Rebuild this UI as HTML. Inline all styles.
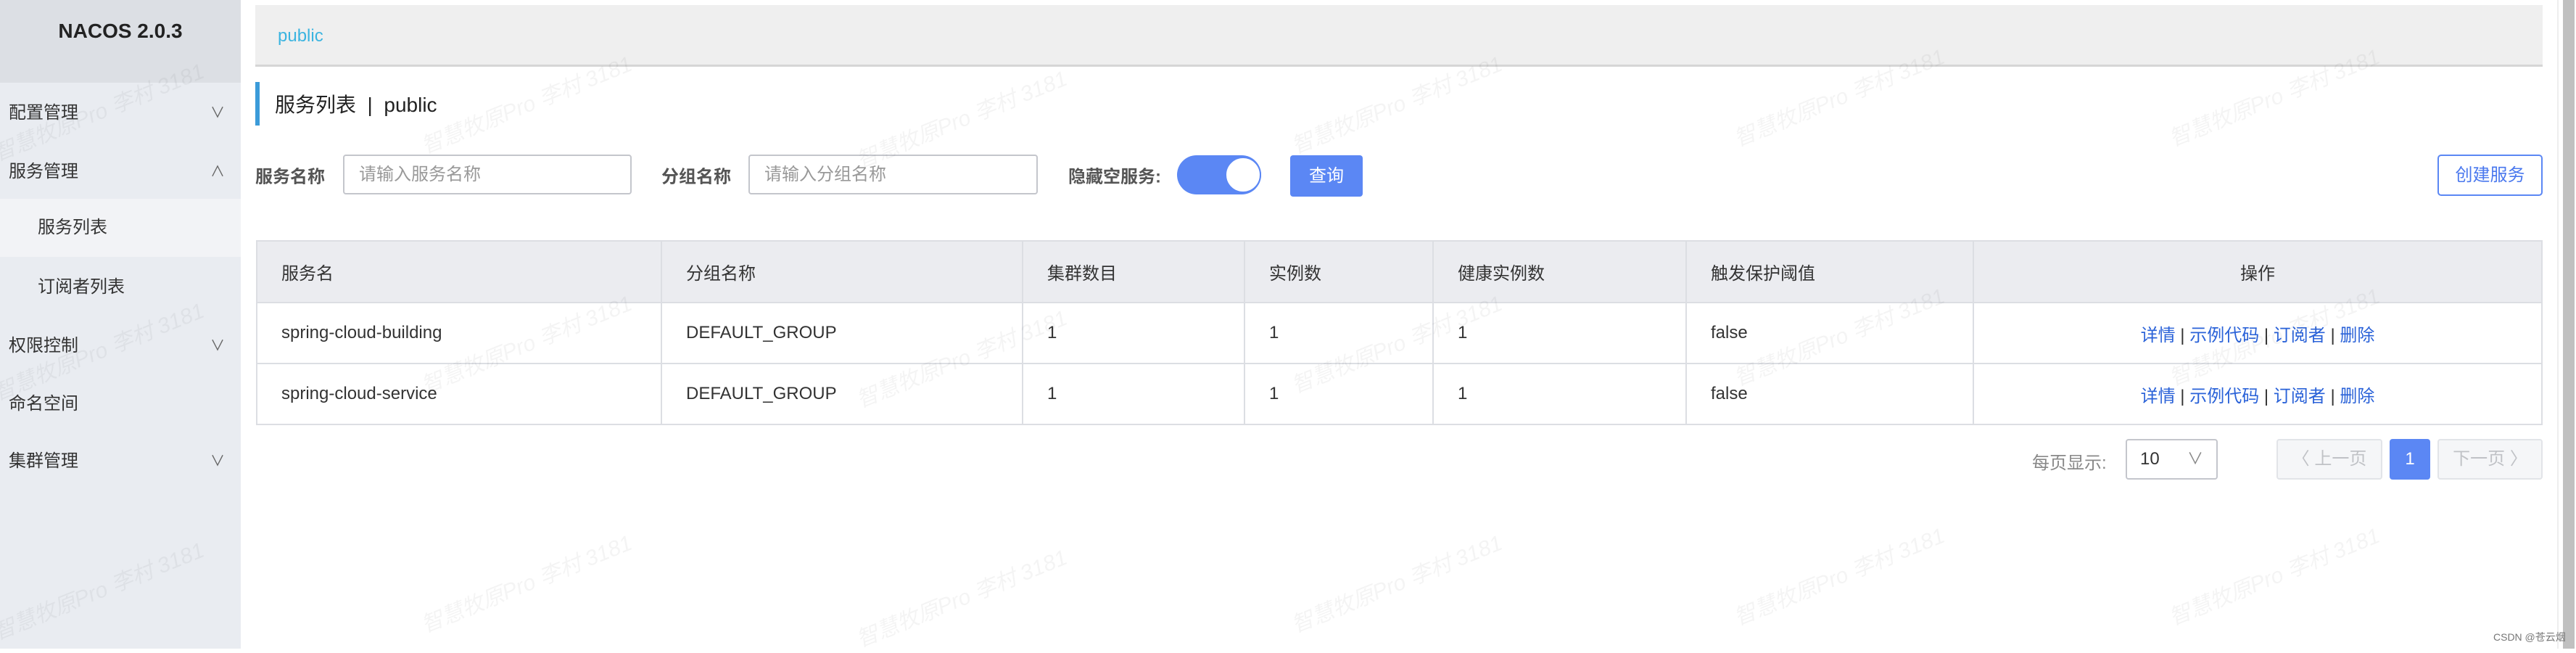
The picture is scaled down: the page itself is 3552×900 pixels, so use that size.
<!DOCTYPE html>
<html><head><meta charset="utf-8"><style>
*{margin:0;padding:0;box-sizing:border-box}
body{width:3552px;height:894px;overflow:hidden;background:#fff;font-family:"Liberation Sans","Noto Sans CJK SC",sans-serif;color:#333;position:relative}
.abs{position:absolute}
.side{left:0;top:0;width:332px;height:894px;background:#e9ecf1}
.logo{left:0;top:0;width:332px;height:114px;background:#dcdfe4;text-align:center;font-weight:bold;font-size:28px;line-height:86px;color:#222}
.mi{left:0;width:332px;height:80px;line-height:80px;font-size:24px;color:#333;padding-left:12px}
.arr{position:absolute;right:22px;top:0;font-size:20px;color:#666}
.sub{padding-left:52px}
.bc{left:352px;top:7px;width:3154px;height:85px;background:#efefef;border-bottom:3px solid #d6d6d6;color:#3bb4e0;font-size:24px;line-height:86px;padding-left:31px}
.title{left:352px;top:113px;height:60px;border-left:6px solid #3b9bd9;font-size:28px;line-height:64px;padding-left:21px;color:#222}
.lbl{font-size:24px;font-weight:bold;color:#555;top:241px;transform:translateY(-50%)}
.inp{top:213px;height:55px;border:2px solid #c4c6cc;border-radius:4px;font-size:24px;color:#999;line-height:51px;padding-left:20px}
.tbl{left:353px;top:331px;width:3153px;border-collapse:collapse;font-size:24px;color:#333}
.tbl td,.tbl th{border:2px solid #dcdee3;text-align:left;padding-left:33px;font-weight:normal}
.tbl th{background:#ebecf0;height:85px}
.tbl td{height:84px}
.lk{color:#2a62d8}
.wm{color:rgba(0,0,0,0.045);font-size:30px;transform:rotate(-22deg);white-space:nowrap;font-style:italic}
.pg{top:605px;height:56px;border:2px solid #e2e4e8;border-radius:4px;background:#f5f6f8;color:#c0c2c6;font-size:24px;line-height:52px;text-align:center}
</style></head><body>
<div class="abs side"></div>
<div class="abs logo">NACOS 2.0.3</div>
<div class="abs mi" style="top:116px">配置管理<span class="arr">∨</span></div>
<div class="abs mi" style="top:197px">服务管理<span class="arr">∧</span></div>
<div class="abs mi sub" style="top:274px;background:#f2f3f6">服务列表</div>
<div class="abs mi sub" style="top:356px">订阅者列表</div>
<div class="abs mi" style="top:437px">权限控制<span class="arr">∨</span></div>
<div class="abs mi" style="top:517px">命名空间</div>
<div class="abs mi" style="top:596px">集群管理<span class="arr">∨</span></div>

<div class="abs bc">public</div>
<div class="abs title">服务列表 &nbsp;|&nbsp; public</div>

<div class="abs lbl" style="left:352px">服务名称</div>
<div class="abs inp" style="left:473px;width:398px">请输入服务名称</div>
<div class="abs lbl" style="left:912px">分组名称</div>
<div class="abs inp" style="left:1032px;width:399px">请输入分组名称</div>
<div class="abs lbl" style="left:1473px">隐藏空服务:</div>
<div class="abs" style="left:1623px;top:214px;width:116px;height:54px;border-radius:27px;background:#5b87f4"></div>
<div class="abs" style="left:1689px;top:216px;width:50px;height:50px;border-radius:50%;background:#fff;border:2px solid #5b87f4"></div>
<div class="abs" style="left:1779px;top:214px;width:100px;height:57px;border-radius:4px;background:#5b87f4;color:#fff;font-size:24px;line-height:57px;text-align:center">查询</div>
<div class="abs" style="left:3361px;top:213px;width:145px;height:57px;border-radius:5px;border:2px solid #5b87f4;color:#4a78ee;font-size:24px;line-height:53px;text-align:center">创建服务</div>

<table class="abs tbl">
<tr><th style="width:558px">服务名</th><th style="width:498px">分组名称</th><th style="width:306px">集群数目</th><th style="width:260px">实例数</th><th style="width:349px">健康实例数</th><th style="width:396px">触发保护阈值</th><th style="text-align:center;padding:0">操作</th></tr>
<tr><td>spring-cloud-building</td><td>DEFAULT_GROUP</td><td>1</td><td>1</td><td>1</td><td>false</td><td style="text-align:center;padding:0"><span class="lk">详情</span> | <span class="lk">示例代码</span> | <span class="lk">订阅者</span> | <span class="lk">删除</span></td></tr>
<tr><td>spring-cloud-service</td><td>DEFAULT_GROUP</td><td>1</td><td>1</td><td>1</td><td>false</td><td style="text-align:center;padding:0"><span class="lk">详情</span> | <span class="lk">示例代码</span> | <span class="lk">订阅者</span> | <span class="lk">删除</span></td></tr>
</table>

<div class="abs" style="left:2802px;top:618px;font-size:24px;color:#888">每页显示:</div>
<div class="abs" style="left:2931px;top:605px;width:127px;height:56px;border:2px solid #c4c6cc;border-radius:4px;font-size:24px;line-height:52px;padding-left:18px;color:#333">10<span style="position:absolute;right:18px;color:#888;font-size:22px">∨</span></div>
<div class="abs pg" style="left:3139px;width:146px">〈 上一页</div>
<div class="abs" style="left:3295px;top:605px;width:56px;height:56px;border-radius:4px;background:#5b87f4;color:#fff;font-size:24px;line-height:56px;text-align:center">1</div>
<div class="abs pg" style="left:3361px;width:145px">下一页 〉</div>

<div class="abs" style="left:3526px;top:0;width:2px;height:894px;background:#eee"></div>
<div class="abs" style="left:3534px;top:0;width:16px;height:894px;background:#c0c0c0"></div>
<div class="abs" style="left:3438px;top:868px;font-size:14px;color:#777">CSDN @苍云烟</div>

<div class="abs wm" style="left:-20px;top:130px">智慧牧原Pro 李村 3181</div>
<div class="abs wm" style="left:570px;top:120px">智慧牧原Pro 李村 3181</div>
<div class="abs wm" style="left:1170px;top:140px">智慧牧原Pro 李村 3181</div>
<div class="abs wm" style="left:1770px;top:120px">智慧牧原Pro 李村 3181</div>
<div class="abs wm" style="left:2380px;top:110px">智慧牧原Pro 李村 3181</div>
<div class="abs wm" style="left:2980px;top:110px">智慧牧原Pro 李村 3181</div>
<div class="abs wm" style="left:-20px;top:460px">智慧牧原Pro 李村 3181</div>
<div class="abs wm" style="left:570px;top:450px">智慧牧原Pro 李村 3181</div>
<div class="abs wm" style="left:1170px;top:470px">智慧牧原Pro 李村 3181</div>
<div class="abs wm" style="left:1770px;top:450px">智慧牧原Pro 李村 3181</div>
<div class="abs wm" style="left:2380px;top:440px">智慧牧原Pro 李村 3181</div>
<div class="abs wm" style="left:2980px;top:440px">智慧牧原Pro 李村 3181</div>
<div class="abs wm" style="left:-20px;top:790px">智慧牧原Pro 李村 3181</div>
<div class="abs wm" style="left:570px;top:780px">智慧牧原Pro 李村 3181</div>
<div class="abs wm" style="left:1170px;top:800px">智慧牧原Pro 李村 3181</div>
<div class="abs wm" style="left:1770px;top:780px">智慧牧原Pro 李村 3181</div>
<div class="abs wm" style="left:2380px;top:770px">智慧牧原Pro 李村 3181</div>
<div class="abs wm" style="left:2980px;top:770px">智慧牧原Pro 李村 3181</div>
</body></html>
